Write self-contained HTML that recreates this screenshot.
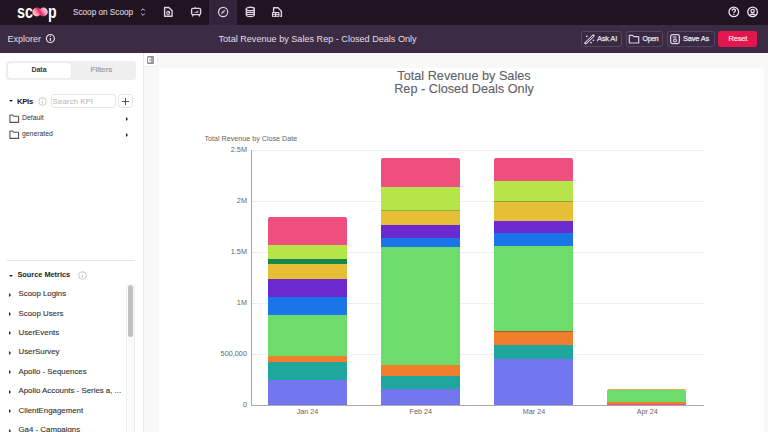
<!DOCTYPE html>
<html><head><meta charset="utf-8">
<style>
*{margin:0;padding:0;box-sizing:border-box}
html,body{width:768px;height:432px;overflow:hidden;background:#fff;font-family:"Liberation Sans",sans-serif}
.a{position:absolute;white-space:nowrap}
#top{position:absolute;left:0;top:0;width:768px;height:25px;background:#1f1420}
#bar{position:absolute;left:0;top:25px;width:768px;height:28px;background:#3c2c43}
.navact{position:absolute;left:209px;top:0;width:28px;height:25px;background:#33263c}
.btn{position:absolute;top:31px;height:16px;border:1px solid #54465e;border-radius:3px;background:#382a42}
.btxt{position:absolute;top:34.2px;font-size:7.5px;letter-spacing:-0.2px;color:#e8e0ec;-webkit-text-stroke:0.25px #e8e0ec;line-height:10px}
#side{position:absolute;left:0;top:53px;width:143px;height:379px;background:#fff}
#sep{position:absolute;left:143px;top:53px;width:1px;height:379px;background:#e6e6e6}
#strip{position:absolute;left:144px;top:53px;width:624px;height:379px;background:#f8f8f8}
#panel{position:absolute;left:159px;top:68px;width:605px;height:364px;background:#fff}
.item{position:absolute;left:18.5px;font-size:7.87px;color:#333;line-height:10px;-webkit-text-stroke:0.12px #333}
.tri{position:absolute;left:9.4px;width:0;height:0;border-top:2.2px solid transparent;border-bottom:2.2px solid transparent;border-left:2.9px solid #222}
.ylab{position:absolute;font-size:7.3px;color:#666;line-height:8px;text-align:right;width:40px}
.xlab{position:absolute;font-size:7.2px;color:#666;line-height:8px;text-align:center;width:60px}
.grid{position:absolute;left:252px;width:452px;height:0;border-top:1px dotted #e2e2e2}
.bar{position:absolute;width:79px;border-radius:2px 2px 0 0;overflow:hidden}
.bar div{width:100%}
</style></head><body>
<div id="top">
  <div class="a" style="left:16.6px;top:1.6px;font-size:17.6px;font-weight:bold;color:#fff;line-height:20px;transform:scaleX(0.82);transform-origin:0 0">sc</div><div class="a" style="left:48.3px;top:1.6px;font-size:17.6px;font-weight:bold;color:#fff;line-height:20px;transform:scaleX(0.8);transform-origin:0 0">p</div>
  <svg class="a" style="left:32px;top:7px" width="16" height="10" viewBox="0 0 16 10">
    <defs><linearGradient id="lg" gradientUnits="userSpaceOnUse" x1="1.5" y1="9.5" x2="14.5" y2="0.5"><stop offset="0" stop-color="#fde6ee"/><stop offset="0.3" stop-color="#f590ad"/><stop offset="0.5" stop-color="#e8285f"/><stop offset="0.7" stop-color="#f590ad"/><stop offset="1" stop-color="#fde6ee"/></linearGradient></defs>
    <circle cx="4.8" cy="5" r="4.4" fill="url(#lg)"/>
    <circle cx="11.4" cy="5" r="4.4" fill="url(#lg)"/>
  </svg>
  <div class="a" style="left:73px;top:7.6px;font-size:8.2px;color:#d5cbd8;-webkit-text-stroke:0.15px #d5cbd8;line-height:10px">Scoop on Scoop</div>
  <svg class="a" style="left:139px;top:7px" width="8" height="10" viewBox="0 0 8 10"><path d="M2.2 3.6 L4 1.8 L5.8 3.6 M2.2 6.6 L4 8.4 L5.8 6.6" stroke="#d5cbd8" stroke-width="1" fill="none"/></svg>
  <div class="navact"></div>
  <!-- doc icon -->
  <svg class="a" style="left:162px;top:5px" width="13" height="13" viewBox="0 0 13 13"><path d="M2.6 2.5 H6.8 L10.1 5.8 V11.2 H2.6 Z" stroke="#ddd2e0" stroke-width="1.4" fill="none" stroke-linejoin="round"/><circle cx="6.2" cy="7.9" r="1.5" stroke="#ddd2e0" stroke-width="1.1" fill="none"/><path d="M6.2 7.9 L7.4 6.9" stroke="#ddd2e0" stroke-width="0.9"/></svg>
  <!-- presentation icon -->
  <svg class="a" style="left:189px;top:5px" width="13" height="13" viewBox="0 0 13 13"><rect x="2.6" y="3.4" width="9" height="6.2" rx="1.3" stroke="#ddd2e0" stroke-width="1.4" fill="none"/><path d="M6.2 1.8 L7.1 3 H5.3 Z" fill="#ddd2e0"/><path d="M4.3 9.7 L3.4 11.6 M9.9 9.7 L10.8 11.6" stroke="#ddd2e0" stroke-width="1.2"/><path d="M4.5 8 L9.3 5.2 V8 Z" fill="#a99cb0"/></svg>
  <!-- compass -->
  <svg class="a" style="left:217px;top:6px" width="12" height="12" viewBox="0 0 12 12"><circle cx="6.1" cy="6" r="4.6" stroke="#ddd2e0" stroke-width="1.2" fill="none"/><path d="M8.4 3.7 L6.9 6.8 L3.8 8.3 L5.3 5.2 Z" fill="#ddd2e0"/><circle cx="6.1" cy="6" r="0.6" fill="#3a2c44"/></svg>
  <!-- database -->
  <svg class="a" style="left:244px;top:6px" width="12" height="12" viewBox="0 0 12 12"><ellipse cx="6.3" cy="3" rx="4.1" ry="1.7" stroke="#ddd2e0" stroke-width="1.4" fill="none"/><path d="M2.2 3 V8.8 C2.2 9.9 4 10.6 6.3 10.6 C8.6 10.6 10.4 9.9 10.4 8.8 V3 M2.2 5 C2.2 6 4 6.6 6.3 6.6 C8.6 6.6 10.4 6 10.4 5 M2.2 7 C2.2 8 4 8.6 6.3 8.6 C8.6 8.6 10.4 8 10.4 7" stroke="#ddd2e0" stroke-width="1.2" fill="none"/></svg>
  <!-- file grid -->
  <svg class="a" style="left:271px;top:6px" width="12" height="12" viewBox="0 0 12 12"><path d="M2.6 6 V1.8 H7 L10.4 5.2 V10.4 H9.2" stroke="#ddd2e0" stroke-width="1.4" fill="none" stroke-linejoin="round"/><rect x="0.9" y="6" width="7.6" height="5" rx="0.9" fill="#ddd2e0"/><rect x="2" y="7" width="2" height="1.2" fill="#4a3d52"/><rect x="5.3" y="7" width="2" height="1.2" fill="#4a3d52"/><rect x="2" y="9" width="2" height="1.2" fill="#4a3d52"/><rect x="5.3" y="9" width="2" height="1.2" fill="#4a3d52"/></svg>
  <!-- help -->
  <svg class="a" style="left:728px;top:6px" width="12" height="12" viewBox="0 0 12 12"><circle cx="5.8" cy="5.9" r="4.8" stroke="#ece4ee" stroke-width="1.3" fill="none"/><path d="M4.2 4.7 C4.2 3.6 4.9 3 5.8 3 C6.8 3 7.5 3.6 7.5 4.5 C7.5 5.6 5.9 5.6 5.9 7" stroke="#ece4ee" stroke-width="1.3" fill="none"/><circle cx="5.9" cy="8.6" r="0.75" fill="#ece4ee"/></svg>
  <!-- user -->
  <svg class="a" style="left:747px;top:6px" width="12" height="12" viewBox="0 0 12 12"><circle cx="5.6" cy="5.9" r="4.8" stroke="#ece4ee" stroke-width="1.3" fill="none"/><circle cx="5.6" cy="5" r="1.7" stroke="#ece4ee" stroke-width="1.2" fill="none"/><path d="M2.9 9.3 C3.6 7.9 7.6 7.9 8.3 9.3" stroke="#ece4ee" stroke-width="1.3" fill="none"/></svg>
</div>
<div id="bar">
  <div class="a" style="left:7.5px;top:8.6px;font-size:9px;color:#e6dde8;line-height:11px">Explorer</div>
  <svg class="a" style="left:45px;top:8.3px" width="11" height="11" viewBox="0 0 11 11"><circle cx="5.4" cy="5.5" r="4" stroke="#e6dde8" stroke-width="1.2" fill="none"/><path d="M5.4 4.9 V7.9" stroke="#e6dde8" stroke-width="1.2"/><circle cx="5.4" cy="3.3" r="0.7" fill="#e6dde8"/></svg>
  <div class="a" style="left:218.5px;top:9px;font-size:9.1px;color:#e6dde8;line-height:11px">Total Revenue by Sales Rep - Closed Deals Only</div>
</div>
<div class="btn" style="left:581px;width:41px"></div>
<div class="btn" style="left:626px;width:37px"></div>
<div class="btn" style="left:667px;width:48px"></div>
<div class="a" style="left:718px;top:31px;width:39px;height:16px;border-radius:3px;background:#e3164e"></div>
<div class="btxt" style="left:597px">Ask AI</div>
<div class="btxt" style="left:642.5px;font-size:7px;letter-spacing:-0.3px">Open</div>
<div class="btxt" style="left:683px">Save As</div>
<div class="btxt" style="left:728.5px;color:#ffe0ea;-webkit-text-stroke:0.2px #ffe0ea">Reset</div>
<!-- button icons -->
<svg class="a" style="left:584px;top:33px" width="12" height="12" viewBox="0 0 12 12"><path d="M1.6 10.2 L9.4 2.6" stroke="#d8cedc" stroke-width="2.6" stroke-linecap="round"/><path d="M2 9.8 L9 3" stroke="#3c2c43" stroke-width="1" /><circle cx="2.8" cy="3.3" r="0.9" fill="#d8cedc"/><circle cx="9.4" cy="7.3" r="0.9" fill="#d8cedc"/><circle cx="7" cy="9.6" r="0.9" fill="#d8cedc"/></svg>
<svg class="a" style="left:628px;top:33px" width="12" height="12" viewBox="0 0 12 12"><path d="M1.3 2.3 H4.6 L5.8 3.6 H10.7 V10 H1.3 Z" stroke="#d8cedc" stroke-width="1.2" fill="none" stroke-linejoin="round"/></svg>
<svg class="a" style="left:669px;top:33px" width="12" height="12" viewBox="0 0 12 12"><path d="M3 1.6 H8.6 Q10.4 1.6 10.4 3.4 V8.8 Q10.4 10.6 8.6 10.6 H3.4 Q1.6 10.6 1.6 8.8 V3 Z" stroke="#d8cedc" stroke-width="1.3" fill="none"/><circle cx="6" cy="7.4" r="1.5" stroke="#d8cedc" stroke-width="1.2" fill="none"/><path d="M3.6 4 H7.6" stroke="#d8cedc" stroke-width="1.1"/></svg>

<div id="side"></div>
<div id="strip"></div>
<div id="sep"></div>
<div id="panel"></div>
<!-- collapse box -->
<div class="a" style="left:143px;top:53px;width:15px;height:13.5px;background:#fff;border:1px solid #eee;border-top:none;border-left:1px solid #e6e6e6"></div>
<svg class="a" style="left:146.8px;top:56px" width="7.4" height="8" viewBox="0 0 7.4 8"><rect x="0" y="0" width="7.4" height="8" rx="1.6" fill="#8a8a8a"/><rect x="0.9" y="1.6" width="3.3" height="4.8" fill="#fff"/><path d="M3.3 2.8 A1.3 1.3 0 0 0 3.3 5.2 Z" fill="#444"/><rect x="4.2" y="1" width="2.3" height="6" fill="#a6a6a6"/></svg>

<!-- tabs -->
<div class="a" style="left:5.5px;top:60.5px;width:130px;height:19px;border-radius:3px;background:#efefef"></div>
<div class="a" style="left:7.5px;top:62.5px;width:63px;height:15px;border-radius:2px;background:#fff;box-shadow:0 0 1px rgba(0,0,0,.15)"></div>
<div class="a" style="left:31.4px;top:64.8px;font-size:7px;font-weight:bold;color:#3a3a3a;line-height:10px">Data</div>
<div class="a" style="left:90.6px;top:64.9px;font-size:7.9px;color:#9d9d9d;-webkit-text-stroke:0.2px #9d9d9d;line-height:10px">Filters</div>

<!-- KPIs -->
<div class="a" style="left:9.2px;top:100.4px;width:0;height:0;border-left:2px solid transparent;border-right:2px solid transparent;border-top:2.5px solid #222"></div>
<div class="a" style="left:17px;top:96.8px;font-size:7.6px;letter-spacing:-0.25px;font-weight:bold;color:#222;line-height:10px">KPIs</div>
<svg class="a" style="left:38px;top:97px" width="9" height="9" viewBox="0 0 9 9"><circle cx="4.5" cy="4.5" r="3.8" stroke="#bbb" stroke-width="0.8" fill="none"/><path d="M4.5 4 V6.6" stroke="#bbb" stroke-width="0.8"/><circle cx="4.5" cy="2.7" r="0.45" fill="#bbb"/></svg>
<div class="a" style="left:51px;top:94px;width:64.5px;height:14px;border:1px solid #e6e6e6;border-radius:3px"></div>
<div class="a" style="left:52.6px;top:96.6px;font-size:8px;color:#b5b5b5;line-height:10px">Search KPI</div>
<div class="a" style="left:118px;top:94px;width:14.5px;height:14px;border:1px solid #e6e6e6;border-radius:3px"></div>
<svg class="a" style="left:121px;top:97px" width="9" height="9" viewBox="0 0 9 9"><path d="M4.5 1 V8 M1 4.5 H8" stroke="#444" stroke-width="0.9"/></svg>
<svg class="a" style="left:8.5px;top:114px" width="11" height="9" viewBox="0 0 11 9"><path d="M0.9 1 H3.6 L4.8 2.3 H9.6 V8.4 H0.9 Z" stroke="#555" stroke-width="1.1" fill="none" stroke-linejoin="round"/></svg>
<div class="a" style="left:22px;top:113px;font-size:6.85px;color:#333;line-height:9px">Default</div>
<div class="tri" style="left:126px;top:116.6px"></div>
<svg class="a" style="left:8.5px;top:130px" width="11" height="9" viewBox="0 0 11 9"><path d="M0.9 1 H3.6 L4.8 2.3 H9.6 V8.4 H0.9 Z" stroke="#555" stroke-width="1.1" fill="none" stroke-linejoin="round"/></svg>
<div class="a" style="left:22px;top:129px;font-size:6.85px;color:#333;line-height:9px">generated</div>
<div class="tri" style="left:126px;top:132.6px"></div>

<!-- divider -->
<div class="a" style="left:6px;top:260px;width:129px;height:1px;background:#e8e8e8"></div>
<!-- Source Metrics -->
<div class="a" style="left:9.2px;top:274.5px;width:0;height:0;border-left:2px solid transparent;border-right:2px solid transparent;border-top:2.5px solid #222"></div>
<div class="a" style="left:17.4px;top:270.4px;font-size:7.37px;font-weight:bold;color:#222;line-height:10px">Source Metrics</div>
<svg class="a" style="left:77.5px;top:271px" width="9" height="9" viewBox="0 0 9 9"><circle cx="4.5" cy="4.5" r="3.8" stroke="#bbb" stroke-width="0.8" fill="none"/><path d="M4.5 4 V6.6" stroke="#bbb" stroke-width="0.8"/><circle cx="4.5" cy="2.7" r="0.45" fill="#bbb"/></svg>
<!-- scroll track -->
<div class="a" style="left:126px;top:283.5px;width:9px;height:149px;background:#fafafa;border-left:1px solid #eee;border-right:1px solid #eee"></div>
<div class="a" style="left:128px;top:285px;width:5px;height:52px;border-radius:3px;background:#c1c1c1"></div>

<div class="tri" style="top:292.50px"></div><div class="item" style="top:289.20px">Scoop Logins</div>
<div class="tri" style="top:311.93px"></div><div class="item" style="top:308.63px">Scoop Users</div>
<div class="tri" style="top:331.36px"></div><div class="item" style="top:328.06px">UserEvents</div>
<div class="tri" style="top:350.79px"></div><div class="item" style="top:347.49px">UserSurvey</div>
<div class="tri" style="top:370.22px"></div><div class="item" style="top:366.92px">Apollo - Sequences</div>
<div class="tri" style="top:389.65px"></div><div class="item" style="top:386.35px">Apollo Accounts - Series a, ...</div>
<div class="tri" style="top:409.08px"></div><div class="item" style="top:405.78px">ClientEngagement</div>
<div class="tri" style="top:428.51px"></div><div class="item" style="top:425.21px">Ga4 - Campaigns</div>

<!-- chart -->
<div class="a" style="left:364px;top:70.3px;width:200px;text-align:center;font-size:12.7px;line-height:12.9px;color:#5e6166;-webkit-text-stroke:0.1px #5e6166">Total Revenue by Sales<br>Rep - Closed Deals Only</div>
<div class="a" style="left:204.5px;top:135px;font-size:7.17px;color:#666;line-height:9px">Total Revenue by Close Date</div>

<div class="grid" style="top:150px"></div>
<div class="grid" style="top:201px"></div>
<div class="grid" style="top:252px"></div>
<div class="grid" style="top:303px"></div>
<div class="grid" style="top:354px"></div>
<div class="ylab" style="left:207px;top:146px">2.5M</div>
<div class="ylab" style="left:207px;top:197px">2M</div>
<div class="ylab" style="left:207px;top:248px">1.5M</div>
<div class="ylab" style="left:207px;top:299px">1M</div>
<div class="ylab" style="left:207px;top:350px">500,000</div>
<div class="ylab" style="left:207px;top:401px">0</div>
<div class="a" style="left:251px;top:150px;width:1px;height:255px;background:#a8a8a8"></div>
<div class="a" style="left:251px;top:404.5px;width:453px;height:1px;background:#aaa"></div>

<div class="bar" style="left:268px;top:217px">
  <div style="height:27.5px;background:#ef4f7e"></div>
  <div style="height:14.5px;background:#b5e548"></div>
  <div style="height:5.2px;background:#15874a"></div>
  <div style="height:15.2px;background:#e6bf36"></div>
  <div style="height:17.3px;background:#6a2ad0"></div>
  <div style="height:17.9px;background:#1a75e8"></div>
  <div style="height:41.3px;background:#6ddc6a"></div>
  <div style="height:6px;background:#f07e2c"></div>
  <div style="height:18.5px;background:#1fa69d"></div>
  <div style="height:24.5px;background:#7377ef"></div>
</div>
<div class="bar" style="left:381.25px;top:158.2px">
  <div style="height:29px;background:#ef4f7e"></div>
  <div style="height:23px;background:#b5e548"></div>
  <div style="height:1px;background:#8fb048"></div>
  <div style="height:14.3px;background:#e6bf36"></div>
  <div style="height:12.1px;background:#6a2ad0"></div>
  <div style="height:9.3px;background:#1a75e8"></div>
  <div style="height:117.9px;background:#6ddc6a"></div>
  <div style="height:11.2px;background:#f07e2c"></div>
  <div style="height:13.4px;background:#1fa69d"></div>
  <div style="height:15.6px;background:#7377ef"></div>
</div>
<div class="bar" style="left:494.3px;top:158.3px">
  <div style="height:22.4px;background:#ef4f7e"></div>
  <div style="height:20.3px;background:#b5e548"></div>
  <div style="height:1.5px;background:#86a83c"></div>
  <div style="height:18.2px;background:#e6bf36"></div>
  <div style="height:11.9px;background:#6a2ad0"></div>
  <div style="height:13px;background:#1a75e8"></div>
  <div style="height:85.4px;background:#6ddc6a"></div>
  <div style="height:1px;background:#a55a2a"></div>
  <div style="height:12.9px;background:#f07e2c"></div>
  <div style="height:14.5px;background:#1fa69d"></div>
  <div style="height:45.6px;background:#7377ef"></div>
</div>
<div class="bar" style="left:607.2px;top:389px">
  <div style="height:1px;background:#e9b04a"></div>
  <div style="height:11.9px;background:#6ddc6a"></div>
  <div style="height:2.3px;background:#f07e2c"></div>
  <div style="height:0.8px;background:#ef4f7e"></div>
</div>
<div class="xlab" style="left:277.5px;top:408px">Jan 24</div>
<div class="xlab" style="left:390.75px;top:408px">Feb 24</div>
<div class="xlab" style="left:504px;top:408px">Mar 24</div>
<div class="xlab" style="left:617.25px;top:408px">Apr 24</div>
</body></html>
